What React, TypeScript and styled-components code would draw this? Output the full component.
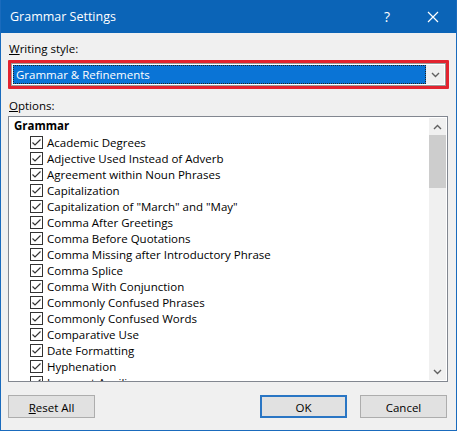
import React from 'react'
import styled, { createGlobalStyle } from 'styled-components'

const GlobalStyle = createGlobalStyle`
    html, body {
        margin: 0;
        padding: 0;
        background: #f0f0f0;
    }
    * {
        box-sizing: border-box;
    }
`

const Window = styled.div`
    width: 457px;
    height: 431px;
    display: flex;
    flex-direction: column;
    background: #f0f0f0;
    border: 1px solid #1a6bbd;
    border-top: 0;
    font-family: 'Segoe UI', 'Open Sans', 'Noto Sans', sans-serif;
    font-size: 11.5px;
    color: #000;
    overflow: hidden;
`

const TitleBar = styled.div`
    height: 33px;
    flex: none;
    display: flex;
    align-items: center;
    background: #0b64b7;
    color: #fff;
    padding-left: 9px;
`

const Title = styled.div`
    flex: 1;
    font-size: 12.5px;
    padding-bottom: 1px;
`

const TitleButton = styled.div`
    width: 46px;
    height: 33px;
    display: flex;
    align-items: center;
    justify-content: center;
    font-size: 14px;
`

const Body = styled.div`
    flex: 1;
    display: flex;
    flex-direction: column;
    padding: 8px 7px 0 7px;
`

const Label = styled.div`
    height: 16px;
    line-height: 16px;
    padding-left: 1px;

    u {
        text-decoration: underline;
    }
`

const Highlight = styled.div`
    margin-top: 3px;
    height: 29px;
    border: 3px solid #e2232f;
    border-radius: 1px;
    display: flex;
`

const Combo = styled.div`
    flex: 1;
    display: flex;
    background: #fff;
    border: 1px solid #9a9a9a;
    padding: 1px;
`

const ComboValue = styled.div`
    flex: 1;
    background: #0a74d6;
    color: #fff;
    outline: 1px dotted #222;
    outline-offset: -1px;
    line-height: 19px;
    padding-left: 3px;
`

const ComboArrow = styled.div`
    width: 18px;
    display: flex;
    align-items: center;
    justify-content: center;
    background: #efefef;
`

const Spacer = styled.div<{ h: number }>`
    height: ${(p) => p.h}px;
    flex: none;
`

const ListBox = styled.div`
    margin-top: 2px;
    height: 266px;
    flex: none;
    display: flex;
    background: #fff;
    border: 1px solid #828790;
    margin-right: 1px;
`

const ListItems = styled.div`
    flex: 1;
    overflow: hidden;
    padding-left: 5px;
`

const Row = styled.div<{ header?: boolean }>`
    height: ${(p) => (p.header ? 17 : 16)}px;
    display: flex;
    align-items: center;
    white-space: nowrap;
    font-weight: ${(p) => (p.header ? 700 : 400)};
    padding-left: ${(p) => (p.header ? 0 : 16)}px;
    gap: 4px;
`

const ScrollBar = styled.div`
    width: 17px;
    display: flex;
    flex-direction: column;
    background: #f0f0f0;
    margin: 1px 1px 1px 0;
`

const ScrollBtn = styled.div`
    height: 17px;
    display: flex;
    align-items: center;
    justify-content: center;
`

const Thumb = styled.div`
    height: 53px;
    background: #cdcdcd;
`

const Track = styled.div`
    flex: 1;
`

const Footer = styled.div`
    margin-top: 13px;
    display: flex;
    gap: 13px;
    padding-right: 2px;
`

const Button = styled.div<{ primary?: boolean }>`
    width: 87px;
    height: 23px;
    display: flex;
    align-items: center;
    justify-content: center;
    background: #e1e1e1;
    border: ${(p) => (p.primary ? '2px solid #2a76c4' : '1px solid #adadad')};
    padding-top: 1px;
`

const Grow = styled.div`
    flex: 1;
`

const Chevron = ({ up }: { up?: boolean }) => (
    <svg width="9" height="6" viewBox="0 0 9 6">
        <polyline
            points={up ? '1,5 4.5,1.5 8,5' : '1,1 4.5,4.5 8,1'}
            fill="none"
            stroke="#606060"
            strokeWidth="1.4"
        />
    </svg>
)

const CheckBox = () => (
    <svg width="13" height="13" viewBox="0 0 13 13" style={{ flex: 'none' }}>
        <rect x="0.5" y="0.5" width="12" height="12" fill="#fff" stroke="#333" />
        <polyline points="2.5,6.5 5,9 10.5,3.5" fill="none" stroke="#333" strokeWidth="1.2" />
    </svg>
)

const options = [
    'Academic Degrees',
    'Adjective Used Instead of Adverb',
    'Agreement within Noun Phrases',
    'Capitalization',
    'Capitalization of "March" and "May"',
    'Comma After Greetings',
    'Comma Before Quotations',
    'Comma Missing after Introductory Phrase',
    'Comma Splice',
    'Comma With Conjunction',
    'Commonly Confused Phrases',
    'Commonly Confused Words',
    'Comparative Use',
    'Date Formatting',
    'Hyphenation',
    'Incorrect Auxiliary',
]

const App: React.FC = () => {
    return (
        <>
            <GlobalStyle />
            <Window>
                <TitleBar>
                    <Title>Grammar Settings</Title>
                    <TitleButton>?</TitleButton>
                    <TitleButton>
                        <svg width="12" height="12" viewBox="0 0 12 12">
                            <path d="M1 1L11 11M11 1L1 11" stroke="#fff" strokeWidth="1.2" />
                        </svg>
                    </TitleButton>
                </TitleBar>

                <Body>
                    <Label>
                        <u>W</u>riting style:
                    </Label>
                    <Highlight>
                        <Combo>
                            <ComboValue>Grammar &amp; Refinements</ComboValue>
                            <ComboArrow>
                                <Chevron />
                            </ComboArrow>
                        </Combo>
                    </Highlight>

                    <Spacer h={9} />
                    <Label>
                        <u>O</u>ptions:
                    </Label>
                    <ListBox>
                        <ListItems>
                            <Row header>Grammar</Row>
                            {options.map((o) => (
                                <Row key={o}>
                                    <CheckBox />
                                    {o}
                                </Row>
                            ))}
                        </ListItems>
                        <ScrollBar>
                            <ScrollBtn>
                                <Chevron up />
                            </ScrollBtn>
                            <Thumb />
                            <Track />
                            <ScrollBtn>
                                <Chevron />
                            </ScrollBtn>
                        </ScrollBar>
                    </ListBox>

                    <Footer>
                        <Button>
                            <span>
                                <u>R</u>eset All
                            </span>
                        </Button>
                        <Grow />
                        <Button primary>OK</Button>
                        <Button>Cancel</Button>
                    </Footer>
                </Body>
            </Window>
        </>
    )
}

export default App
